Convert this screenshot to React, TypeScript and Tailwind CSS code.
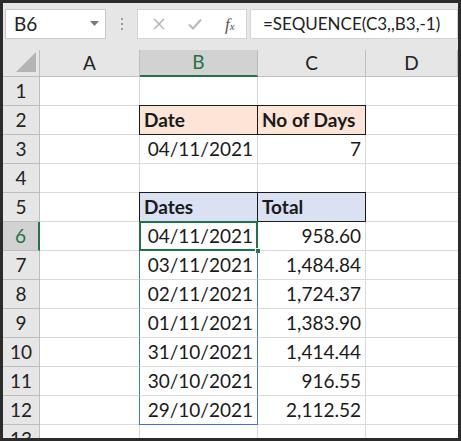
import React from 'react';

const cols = ['A', 'B', 'C', 'D'];

const rows: { b?: string; c?: string; kind?: 'peach' | 'blue' | 'data' | 'plain' }[] = [
  {},
  { b: 'Date', c: 'No of Days', kind: 'peach' },
  { b: '04/11/2021', c: '7', kind: 'plain' },
  {},
  { b: 'Dates', c: 'Total', kind: 'blue' },
  { b: '04/11/2021', c: '958.60', kind: 'data' },
  { b: '03/11/2021', c: '1,484.84', kind: 'data' },
  { b: '02/11/2021', c: '1,724.37', kind: 'data' },
  { b: '01/11/2021', c: '1,383.90', kind: 'data' },
  { b: '31/10/2021', c: '1,414.44', kind: 'data' },
  { b: '30/10/2021', c: '916.55', kind: 'data' },
  { b: '29/10/2021', c: '2,112.52', kind: 'data' },
];

function Toolbar() {
  return (
    <div className="h-[47px] flex items-start pt-[6px] pl-[2px] shrink-0">
      <div className="w-[101px] h-[30px] bg-white border border-[#c8c8c8] flex items-center justify-between pl-[8px] pr-[6px]">
        <span className="text-[19px] text-[#222]">B6</span>
        <svg width="9" height="6" viewBox="0 0 9 6">
          <path d="M0 0 L9 0 L4.5 5 Z" fill="#7a7a7a" />
        </svg>
      </div>
      <div className="w-[31px] h-[30px] flex flex-col items-center justify-center gap-[3px]">
        <span className="w-[2px] h-[2px] bg-[#9a9a9a]" />
        <span className="w-[2px] h-[2px] bg-[#9a9a9a]" />
        <span className="w-[2px] h-[2px] bg-[#9a9a9a]" />
      </div>
      <div className="w-[110px] h-[30px] bg-white border border-[#d4d4d4] flex items-center">
        <svg width="12" height="12" viewBox="0 0 12 12" className="ml-[15px]">
          <path d="M1 1 L11 11 M11 1 L1 11" stroke="#b8b8b8" strokeWidth="1.6" />
        </svg>
        <svg width="14" height="12" viewBox="0 0 14 12" className="ml-[23px]">
          <path d="M1 6.5 L5 10.5 L13 1.5" stroke="#b8b8b8" strokeWidth="2" fill="none" />
        </svg>
        <span className="ml-[23px] text-[#555] italic text-[17px] leading-none" style={{ fontFamily: '"Liberation Serif", serif' }}>
          f<span className="text-[11px]">x</span>
        </span>
      </div>
      <div className="ml-[3px] flex-1 h-[30px] bg-white border border-[#d4d4d4] flex items-center pl-[12px]">
        <span className="text-[17px] text-[#222] whitespace-nowrap">=SEQUENCE(C3,,B3,-1)</span>
      </div>
    </div>
  );
}

export default function App() {
  return (
    <div className="w-[461px] h-[441px] bg-[#2b2b2b] p-[3px]" style={{ fontFamily: 'Lato, "Liberation Sans", sans-serif' }}>
      <div className="w-full h-full bg-[#e6e6e6] flex flex-col overflow-hidden">
        <Toolbar />
        <div className="grid grid-cols-[37px_100px_118px_108px_1fr] auto-rows-[29px] grid-rows-[27px] bg-white text-[19px] text-[#1a1a1a]">
          {/* header row */}
          <div className="bg-[#e6e6e6] border-r border-b border-[#bdbdbd] relative">
            <svg width="20" height="20" viewBox="0 0 20 20" className="absolute left-[13px] top-[2px]">
              <path d="M20 0 L20 20 L0 20 Z" fill="#b4b4b4" />
            </svg>
          </div>
          {cols.map((c) =>
            c === 'B' ? (
              <div key={c} className="bg-[#d2d2d2] border-r border-[#bdbdbd] border-b-2 border-b-[#217346] flex items-center justify-center text-[#217346]">
                {c}
              </div>
            ) : (
              <div key={c} className="bg-[#e6e6e6] border-r border-b border-[#bdbdbd] flex items-center justify-center text-[#222]">
                {c}
              </div>
            )
          )}

          {rows.map((r, i) => {
            const n = i + 1;
            const sel = n === 6;
            const bBox =
              r.kind === 'peach'
                ? 'bg-[#fce4d6] border border-[#1a1a1a] font-bold justify-start pl-[4px]'
                : r.kind === 'blue'
                ? 'bg-[#d9e1f2] border border-[#1a1a1a] font-bold justify-start pl-[4px]'
                : '';
            return (
              <React.Fragment key={n}>
                <div
                  className={
                    sel
                      ? 'bg-[#d2d2d2] border-b border-[#bdbdbd] border-r-2 border-r-[#217346] flex items-center justify-center text-[#217346]'
                      : 'bg-[#e6e6e6] border-r border-b border-[#bdbdbd] flex items-center justify-center text-[#222]'
                  }
                >
                  {n}
                </div>
                <div className="border-r border-b border-[#d9d9d9]" />
                {r.kind === 'peach' || r.kind === 'blue' ? (
                  <>
                    <div className={`flex items-center ${bBox} -mt-px -ml-px`}>{r.b}</div>
                    <div className={`flex items-center ${bBox} -mt-px -ml-px`}>{r.c}</div>
                  </>
                ) : r.kind === 'data' ? (
                  <>
                    <div
                      className={`relative flex items-center justify-end pr-[4px] border-x border-[#4472c4] -ml-px ${
                        n === 12 ? 'border-b' : 'border-b border-b-[#d9d9d9]'
                      }`}
                    >
                      {sel && (
                        <>
                          <div className="absolute -left-px -top-px -right-px -bottom-px border-2 border-[#217346]" />
                          <div className="absolute -right-[4px] -bottom-[4px] w-[6px] h-[6px] bg-[#217346] border border-white" />
                        </>
                      )}
                      <span className="relative">{r.b}</span>
                    </div>
                    <div className="flex items-center justify-end pr-[4px] border-r border-b border-[#d9d9d9]">{r.c}</div>
                  </>
                ) : r.kind === 'plain' ? (
                  <>
                    <div className="flex items-center justify-end pr-[4px] border-r border-b border-[#d9d9d9]">{r.b}</div>
                    <div className="flex items-center justify-end pr-[4px] border-r border-b border-[#d9d9d9]">{r.c}</div>
                  </>
                ) : (
                  <>
                    <div className="border-r border-b border-[#d9d9d9]" />
                    <div className="border-r border-b border-[#d9d9d9]" />
                  </>
                )}
                <div className="border-b border-[#d9d9d9]" />
              </React.Fragment>
            );
          })}
          <div className="bg-[#e6e6e6] border-r border-[#bdbdbd] flex items-start justify-center text-[#222]">13</div>
          <div className="border-r border-[#d9d9d9]" />
          <div className="border-r border-[#d9d9d9]" />
          <div className="border-r border-[#d9d9d9]" />
          <div />
        </div>
      </div>
    </div>
  );
}
